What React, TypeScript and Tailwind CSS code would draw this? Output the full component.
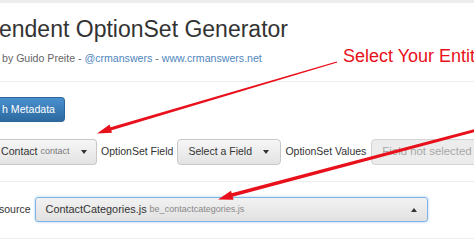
import React from 'react';

const font = { fontFamily: '"Liberation Sans", Arial, sans-serif' };

const Caret: React.FC<{ up?: boolean }> = ({ up }) => (
  <svg width="6" height="4" viewBox="0 0 6 4" className="shrink-0">
    {up ? <polygon points="0,4 6,4 3,0" fill="#333" /> : <polygon points="0,0 6,0 3,4" fill="#333" />}
  </svg>
);

export default function App() {
  return (
    <div className="relative w-[474px] h-[248px] overflow-hidden bg-white text-[#333]" style={font}>
      <div className="h-[3px] bg-[#ededed]" />

      {/* header */}
      <h1 className="mt-[12px] -ml-[1px] whitespace-nowrap text-[23px] leading-[28px] font-normal text-[#333]">
        endent OptionSet Generator
      </h1>
      <p className="mt-[8px] pl-[2px] whitespace-nowrap text-[10.6px] leading-[14px] text-[#666]">
        by Guido Preite - <span className="text-[#4f86bd]">@crmanswers</span> -{' '}
        <span className="text-[#4f86bd]">www.crmanswers.net</span>
      </p>
      <div className="mt-[16px] border-t border-[#eee]" />

      {/* refresh button */}
      <button className="mt-[15px] flex h-[25px] items-center rounded-r-[4px] border border-l-0 border-[#2b669a] bg-gradient-to-b from-[#4a90cf] to-[#2c6aa0] pl-[2px] pr-[9px] text-[10.6px] text-white">
        h Metadata
      </button>

      {/* entity / field row */}
      <div className="mt-[17px] flex h-[26px] items-center whitespace-nowrap text-[10.5px]">
        <div className="flex h-full w-[97px] shrink-0 items-center rounded-r-[4px] border border-l-0 border-[#c8c8c8] bg-gradient-to-b from-[#f6f6f6] to-[#e3e3e3] pl-[1px] pr-[9px]">
          <span className="text-[10.6px]">Contact</span>
          <span className="ml-[3px] text-[9px] text-[#777]">contact</span>
          <span className="flex-1" />
          <Caret />
        </div>
        <span className="ml-[4px] shrink-0">OptionSet Field</span>
        <div className="ml-[4px] flex h-full w-[104px] shrink-0 items-center rounded-[4px] border border-[#c8c8c8] bg-gradient-to-b from-[#f6f6f6] to-[#e3e3e3] pl-[10px] pr-[11px]">
          <span>Select a Field</span>
          <span className="flex-1" />
          <Caret />
        </div>
        <span className="ml-[4px] shrink-0">OptionSet Values</span>
        <div className="ml-[5px] flex h-full w-[140px] shrink-0 items-center rounded-l-[4px] border border-[#d4d4d4] bg-[#ececec] pl-[10px] text-[11.4px] text-[#a8a8a8]">
          Field not selected
        </div>
      </div>
      <div className="mt-[16px] border-t border-[#eee]" />

      {/* web resource row */}
      <div className="mt-[15px] flex h-[25px] items-center whitespace-nowrap">
        <span className="-ml-[1px] text-[10.5px]">source</span>
        <div className="ml-[4px] flex h-full w-[393px] items-center rounded-[3px] border border-[#7fb3e3] bg-gradient-to-b from-[#f2f2f2] to-[#e1e1e1] pl-[10px] pr-[10px] shadow-[0_0_3px_rgba(102,175,233,0.6)]">
          <span className="text-[10.9px] text-[#333]">ContactCategories.js</span>
          <span className="ml-[3px] text-[9px] text-[#888]">be_contactcategories.js</span>
          <span className="flex-1" />
          <Caret up />
        </div>
      </div>
      <div className="mt-[16px] border-t border-[#eee]" />

      {/* annotation label */}
      <div className="absolute left-[343px] top-[45px] whitespace-nowrap text-[18px] leading-[22px] text-[#e8101a]">
        Select Your Entity
      </div>

      {/* annotation arrows */}
      <svg className="pointer-events-none absolute inset-0" width="474" height="248" viewBox="0 0 474 248">
        <polygon points="337.3,62.6 336.7,61.4 109.8,127.4 110.8,130.6" fill="#e8101a" />
        <polygon points="97,133.5 112,132.8 109.6,124.6" fill="#e8101a" />
        <polygon points="480,127.6 480.8,130.4 231.5,197 230.5,193.4" fill="#e8101a" />
        <polygon points="218,199.5 233.5,199.8 231,190.8" fill="#e8101a" />
      </svg>
    </div>
  );
}
